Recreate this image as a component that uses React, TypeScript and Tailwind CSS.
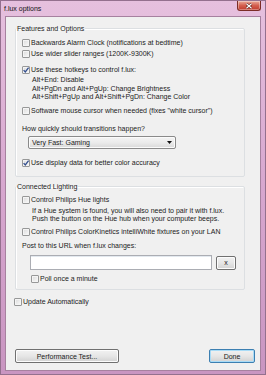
import type { ReactNode } from "react";

const font = { fontFamily: '"Liberation Sans", Arial, sans-serif' };

function Box({ checked = false }: { checked?: boolean }) {
  return (
    <span className="relative flex h-[8px] w-[8px] shrink-0 items-center justify-center rounded-[1px] border border-[#979898] bg-gradient-to-br from-[#dadada] to-[#fbfbfb] shadow-[inset_0_0_0_1px_#f4f4f4]">
      {checked && (
        <svg width="8" height="8" viewBox="0 0 8 8" className="absolute -left-[1px] -top-[1px]">
          <path d="M1.6 4.1 L3.3 6 L6.6 1.6" fill="none" stroke="#34508f" strokeWidth="1.3" />
        </svg>
      )}
    </span>
  );
}

function Check({ label, checked, className = "" }: { label: string; checked?: boolean; className?: string }) {
  return (
    <div className={`flex h-[9px] items-center gap-[1px] ${className}`}>
      <Box checked={checked} />
      <span className="whitespace-nowrap leading-[9px]">{label}</span>
    </div>
  );
}

function Group({ title, children, className = "" }: { title: string; children: ReactNode; className?: string }) {
  return (
    <fieldset
      className={`ml-[9px] w-[230px] rounded-[2px] border border-[#dcdfe2] shadow-[inset_1px_1px_0_#ffffff] ${className}`}
    >
      <legend className="px-[1px] leading-[9px]">{title}</legend>
      {children}
    </fieldset>
  );
}

function Button({ children, primary = false, className = "" }: { children: ReactNode; primary?: boolean; className?: string }) {
  return (
    <div
      className={`flex h-[14px] items-center justify-center rounded-[2px] border bg-gradient-to-b from-[#f2f2f2] via-[#e6e6e6] to-[#d2d2d2] leading-[9px] ${
        primary
          ? "border-[#3c7fb1] shadow-[inset_0_0_0_1px_#a9dcf7]"
          : "border-[#707070] shadow-[inset_0_0_0_1px_#fcfcfc]"
      } ${className}`}
    >
      {children}
    </div>
  );
}

export default function App() {
  return (
    <div
      style={font}
      className="flex h-[375px] w-[266px] flex-col border border-[#94708e] bg-gradient-to-b from-[#e6c0de] via-[#d7a7cf] to-[#c995c1] text-[7px] text-[#1b1b1b]"
    >
      {/* Title bar */}
      <div className="flex h-[15px] shrink-0 items-start">
        <span className="ml-[3px] mt-[3px] leading-[9px] text-[#111]">f.lux options</span>
        <div className="ml-auto mr-[4px] flex h-[10px] w-[24px] items-center justify-center rounded-b-[3px] border border-t-0 border-[#7b2d26] bg-gradient-to-b from-[#e9a99a] via-[#d45f4e] to-[#c0392b] shadow-[inset_0_0_0_1px_rgba(255,255,255,0.35)]">
          <svg width="8" height="6" viewBox="0 0 8 6">
            <path d="M1.5 0.8 L6.5 5.2 M6.5 0.8 L1.5 5.2" stroke="#5a1a14" strokeWidth="2.4" />
            <path d="M1.5 0.8 L6.5 5.2 M6.5 0.8 L1.5 5.2" stroke="#ffffff" strokeWidth="1.2" />
          </svg>
        </div>
      </div>

      {/* Client area */}
      <div className="mx-[4px] mb-[3px] flex flex-1 flex-col border border-[#a6819f] bg-[#f0f0f0] pb-[7px]">
        <Group title="Features and Options" className="mt-[7px] pb-[9px]">
          <div className="pl-[6px]">
            <Check className="mt-[5px]" label="Backwards Alarm Clock (notifications at bedtime)" />
            <Check className="mt-[2px]" label="Use wider slider ranges (1200K-9300K)" />
            <Check className="mt-[7px]" checked label="Use these hotkeys to control f.lux:" />
            <div className="ml-[10px] mt-[2px] leading-[8.5px]">
              <div>Alt+End: Disable</div>
              <div>Alt+PgDn and Alt+PgUp: Change Brightness</div>
              <div>Alt+Shift+PgUp and Alt+Shift+PgDn: Change Color</div>
            </div>
            <Check className="mt-[4.5px]" label={'Software mouse cursor when needed (fixes "white cursor")'} />
            <div className="mt-[9px] leading-[9px]">How quickly should transitions happen?</div>
            <div className="ml-[6px] mt-[3px] flex h-[13px] w-[148px] items-center justify-between rounded-[2px] border border-[#8a8a8a] bg-gradient-to-b from-[#f4f4f4] via-[#ebebeb] to-[#d9d9d9] pl-[3px] pr-[3px] shadow-[inset_0_0_0_1px_#fbfbfb]">
              <span className="leading-[9px]">Very Fast: Gaming</span>
              <svg width="5" height="3" viewBox="0 0 5 3">
                <path d="M0 0 L5 0 L2.5 3 Z" fill="#111" />
              </svg>
            </div>
            <Check className="mt-[9px]" checked label="Use display data for better color accuracy" />
          </div>
        </Group>

        <Group title="Connected Lighting" className="mt-[5px] pb-[6px]">
          <div className="pl-[6px]">
            <Check className="mt-[4px]" label="Control Philips Hue lights" />
            <div className="ml-[10px] mt-[3px] leading-[8px]">
              <div>If a Hue system is found, you will also need to pair it with f.lux.</div>
              <div>Push the button on the Hue hub when your computer beeps.</div>
            </div>
            <Check className="mt-[4px]" label="Control Philips ColorKinetics intelliWhite fixtures on your LAN" />
            <div className="mt-[5px] leading-[9px]">Post to this URL when f.lux changes:</div>
            <div className="ml-[8px] mt-[5px] flex h-[15px] items-center gap-[4px]">
              <div className="h-[15px] w-[182px] border border-[#abadb3] bg-white shadow-[inset_0_1px_0_#e3e9ef]" />
              <Button className="w-[20px]">x</Button>
            </div>
            <Check className="ml-[9px] mt-[4px]" label="Poll once a minute" />
          </div>
        </Group>

        <Check className="ml-[8px] mt-[7px]" label="Update Automatically" />

        <div className="mt-auto flex items-center justify-between pl-[9px] pr-[5px]">
          <Button className="w-[104px]">Performance Test...</Button>
          <Button primary className="w-[46px]">
            Done
          </Button>
        </div>
      </div>
    </div>
  );
}
